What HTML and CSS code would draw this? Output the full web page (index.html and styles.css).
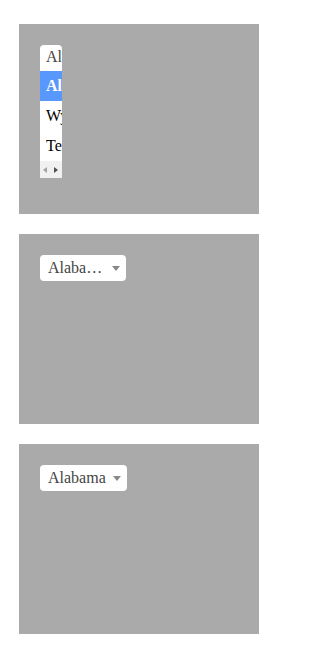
FILE: index.html
```html
<!DOCTYPE html>
<html>
<head>
<meta charset="utf-8">
<link rel="stylesheet" href="styles.css">
</head>
<body>
<div class="stack">
  <div class="panel">
    <div class="listwrap">
      <div class="listbox">
        <div class="opt first">Alabama</div>
        <div class="opt active">Alaska</div>
        <div class="opt">Wyoming</div>
        <div class="opt">Texas</div>
      </div>
      <div class="hbar">
        <span class="sarrow left"></span>
        <span class="sarrow right"></span>
      </div>
    </div>
  </div>
  <div class="panel">
    <div class="select">
      <span class="value clip">Alabama</span>
      <span class="arrow"></span>
    </div>
  </div>
  <div class="panel">
    <div class="select">
      <span class="value">Alabama</span>
      <span class="arrow"></span>
    </div>
  </div>
</div>
</body>
</html>
```
FILE: styles.css
```css
html, body {
  margin: 0;
  padding: 0;
  background: #ffffff;
}
body {
  font-family: "Liberation Serif", "Times New Roman", serif;
  font-size: 16px;
  color: #444;
}
.stack {
  display: flex;
  flex-direction: column;
  gap: 20px;
  padding: 24px 0 0 19px;
}
.panel {
  width: 240px;
  height: 190px;
  background: #aaaaaa;
  box-sizing: border-box;
  padding: 21px 0 0 21px;
  display: flex;
  align-items: flex-start;
}
.listwrap {
  width: 22px;
  background: #fff;
  border-radius: 4px 4px 0 0;
  overflow: hidden;
}
.listbox {
  overflow: hidden;
}
.opt {
  white-space: nowrap;
  line-height: 18px;
  padding: 6px 6px;
  color: #000;
}
.opt.first {
  padding: 3px 6px 5px;
  color: #444;
}
.opt.active {
  background: #5897fb;
  color: #fff;
  font-weight: bold;
}
.hbar {
  height: 17px;
  background: #f1f1f1;
  display: flex;
  align-items: center;
  justify-content: space-between;
  padding: 0 4px 0 3px;
}
.sarrow {
  width: 0;
  height: 0;
  border-style: solid;
  border-color: transparent;
}
.sarrow.left {
  border-width: 3px 4px 3px 0;
  border-right-color: #a3a3a3;
}
.sarrow.right {
  border-width: 3px 0 3px 4px;
  border-left-color: #505050;
}
.select {
  display: flex;
  align-items: center;
  height: 26px;
  background: #fff;
  border-radius: 4px;
  padding: 0 6px 0 8px;
}
.value {
  white-space: nowrap;
  line-height: 18px;
}
.value.clip {
  width: 57px;
  overflow: hidden;
  text-overflow: ellipsis;
}
.arrow {
  margin-left: 7px;
  width: 0;
  height: 0;
  border-style: solid;
  border-width: 5px 4px 0 4px;
  border-color: #888 transparent transparent transparent;
}
```
